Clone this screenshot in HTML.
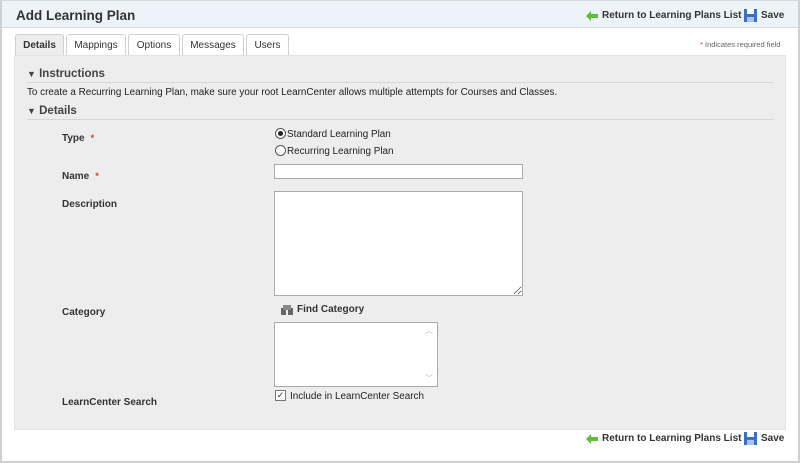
<!DOCTYPE html>
<html><head><style>
*{margin:0;padding:0;box-sizing:border-box}
body{width:800px;height:463px;position:relative;background:#fff;font-family:"Liberation Sans",Arial,sans-serif;font-size:11px;color:#222;overflow:hidden}
.a{position:absolute;white-space:nowrap}
.frame{position:absolute;left:0;top:0;width:800px;height:463px;border:2px solid #cfcfcf;border-top:1px solid #d8d8d8}
.hdr{position:absolute;left:2px;top:1px;width:796px;height:27px;background:#eef3fa;border-bottom:1px solid #d6dde6}
.tab{position:absolute;top:34px;height:22px;border:1px solid #d0d0d0;border-bottom:none;background:#fff;border-radius:3px 3px 0 0;font-size:10px;text-align:center;line-height:21px;color:#333}
.panel{position:absolute;left:14px;top:55px;width:772px;height:375px;background:#ededed;border:1px solid #e2e2e2}
.lbl{font-weight:bold;font-size:10px;color:#333}
.req{color:#e33;margin-left:6px;font-size:9px}
.sec{font-weight:bold;font-size:11.5px;color:#444}
.line{position:absolute;height:1px;background:#d6d6d6}
input,textarea{position:absolute;background:#fff;border:1px solid #aaa}
.radio{position:absolute;width:11px;height:11px;border:1px solid #555;border-radius:50%;background:#fff}
.lnk{font-weight:bold;font-size:10px;color:#333}
</style></head><body>
<div class="frame"></div>
<div class="hdr"></div>
<div class="a" style="left:16px;top:8px;font-size:13.5px;font-weight:bold;color:#333">Add Learning Plan</div>
<svg class="a" style="left:586px;top:11px" width="12" height="10" viewBox="0 0 12 10"><path d="M0 5 L5 0 V3 H12 V7 H5 V10 Z" fill="#5cbf3a"/></svg>
<div class="a lnk" style="left:602px;top:10px">Return to Learning Plans List</div>
<svg class="a" style="left:744px;top:9px" width="13" height="13" viewBox="0 0 13 13"><rect width="13" height="13" fill="#3a6fc4"/><rect x="3" y="0" width="7" height="5" fill="#fff"/><rect x="3" y="8" width="7" height="5" fill="#a8c4ee"/></svg>
<div class="a lnk" style="left:761px;top:10px">Save</div>

<div class="tab" style="left:15px;width:49px;font-weight:bold;background:#ededed">Details</div>
<div class="tab" style="left:66px;width:60px">Mappings</div>
<div class="tab" style="left:128px;width:52px">Options</div>
<div class="tab" style="left:182px;width:62px">Messages</div>
<div class="tab" style="left:246px;width:43px">Users</div>
<div class="a" style="left:700px;top:40px;font-size:7.5px;color:#666"><span style="color:#e33">*</span> Indicates required field</div>

<div class="panel"></div>
<div class="a sec" style="left:27px;top:68px"><span style="font-size:9px">▼</span> Instructions</div>
<div class="line" style="left:27px;top:82px;width:746px"></div>
<div class="a" style="left:27px;top:87px;font-size:9.9px;color:#222">To create a Recurring Learning Plan, make sure your root LearnCenter allows multiple attempts for Courses and Classes.</div>
<div class="a sec" style="left:27px;top:105px"><span style="font-size:9px">▼</span> Details</div>
<div class="line" style="left:27px;top:119px;width:746px"></div>

<div class="a lbl" style="left:62px;top:133px">Type<span class="req">*</span></div>
<div class="radio" style="left:275px;top:128px"><div style="position:absolute;left:2px;top:2px;width:5px;height:5px;border-radius:50%;background:#222"></div></div>
<div class="a" style="left:287px;top:129px;font-size:9.9px">Standard Learning Plan</div>
<div class="radio" style="left:275px;top:145px"></div>
<div class="a" style="left:287px;top:146px;font-size:9.9px">Recurring Learning Plan</div>

<div class="a lbl" style="left:62px;top:171px">Name<span class="req">*</span></div>
<input style="left:274px;top:164px;width:249px;height:15px">
<div class="a lbl" style="left:62px;top:199px">Description</div>
<textarea style="left:274px;top:191px;width:249px;height:105px"></textarea>

<div class="a lbl" style="left:62px;top:307px">Category</div>
<svg class="a" style="left:281px;top:305px" width="12" height="10" viewBox="0 0 12 10"><rect x="0" y="3" width="5" height="7" fill="#666"/><rect x="7" y="3" width="5" height="7" fill="#666"/><rect x="2" y="0" width="8" height="5" fill="#888"/></svg>
<div class="a lnk" style="left:297px;top:304px">Find Category</div>
<div class="a" style="left:274px;top:322px;width:164px;height:65px;background:#fff;border:1px solid #aaa"><div class="a" style="right:4px;top:2px;font-size:8px;color:#bbb">︿</div><div class="a" style="right:4px;bottom:2px;font-size:8px;color:#bbb">﹀</div></div>

<div class="a lbl" style="left:62px;top:397px">LearnCenter Search</div>
<div class="a" style="left:275px;top:390px;width:11px;height:11px;border:1px solid #777;background:#fff;font-size:9px;line-height:9px;text-align:center;color:#333">✓</div>
<div class="a" style="left:290px;top:391px;font-size:9.9px">Include in LearnCenter Search</div>

<svg class="a" style="left:586px;top:434px" width="12" height="10" viewBox="0 0 12 10"><path d="M0 5 L5 0 V3 H12 V7 H5 V10 Z" fill="#5cbf3a"/></svg>
<div class="a lnk" style="left:602px;top:433px">Return to Learning Plans List</div>
<svg class="a" style="left:744px;top:432px" width="13" height="13" viewBox="0 0 13 13"><rect width="13" height="13" fill="#3a6fc4"/><rect x="3" y="0" width="7" height="5" fill="#fff"/><rect x="3" y="8" width="7" height="5" fill="#a8c4ee"/></svg>
<div class="a lnk" style="left:761px;top:433px">Save</div>
</body></html>
